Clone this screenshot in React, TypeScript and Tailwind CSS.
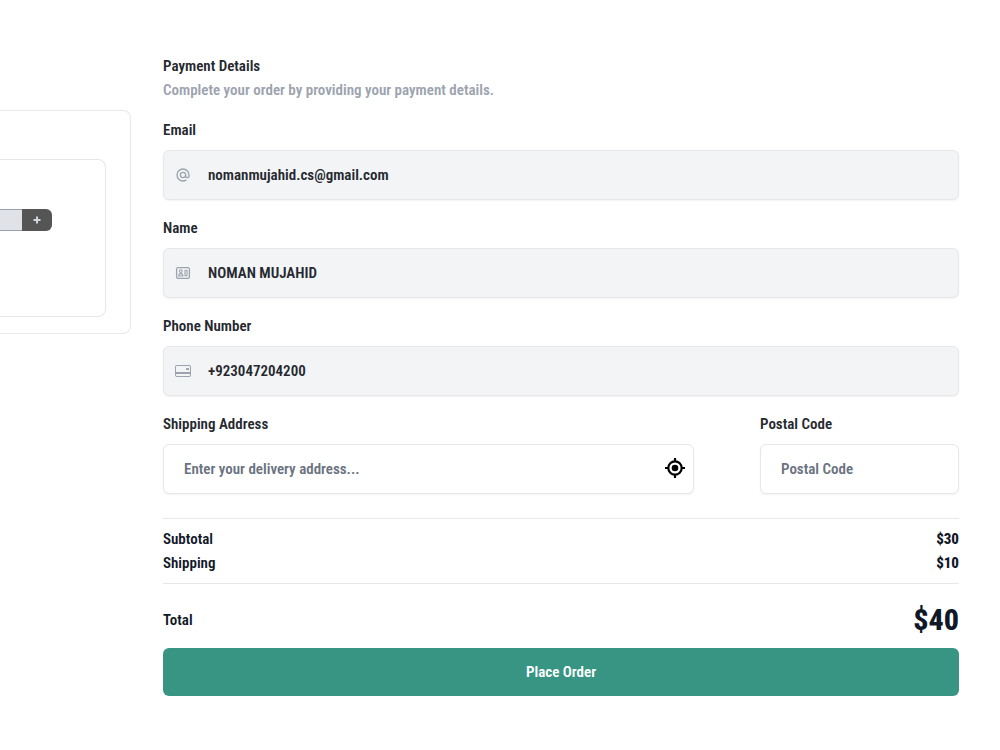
import React from "react";
import { BsCreditCard2Back } from "react-icons/bs";

function AtIcon() {
  return (
    <svg className="size-4" viewBox="0 0 24 24" fill="none" stroke="currentColor" strokeWidth="2" strokeLinecap="round" strokeLinejoin="round" aria-hidden="true">
      <path d="M16 12a4 4 0 10-8 0 4 4 0 008 0zm0 0v1.5a2.5 2.5 0 005 0V12a9 9 0 10-9 9m4.5-1.206a8.959 8.959 0 01-4.5 1.207" />
    </svg>
  );
}

function IdCardIcon() {
  return (
    <svg className="size-4" viewBox="0 0 16 16" fill="none" stroke="currentColor" aria-hidden="true">
      <rect x="1.6" y="2.6" width="12.8" height="10.8" rx="1.6" strokeWidth="1.3" />
      <circle cx="5.8" cy="6.1" r="1.4" strokeWidth="1.1" />
      <path d="M3.7 11c0-1.7.9-2.4 2.1-2.4s2.1.7 2.1 2.4z" strokeWidth="1.1" />
      <rect x="10" y="5.2" width="2" height="5.6" rx="0.4" strokeWidth="1.1" />
    </svg>
  );
}

function LocateIcon() {
  return (
    <svg className="size-5" viewBox="0 0 20 20" fill="none" stroke="currentColor" strokeWidth="2.2" aria-hidden="true">
      <circle cx="10" cy="10" r="6.7" />
      <circle cx="10" cy="10" r="3.3" fill="currentColor" stroke="none" />
      <path d="M10 0v3.6M10 16.4V20M0 10h3.6M16.4 10H20" />
    </svg>
  );
}

type FieldProps = {
  id: string;
  label: string;
  type: string;
  value: string;
  icon: React.ReactNode;
};

function Field({ id, label, type, value, icon }: FieldProps) {
  return (
    <div className="mt-4">
      <label htmlFor={id} className="mb-2 block">{label}</label>
      <div className="relative">
        <input
          id={id}
          type={type}
          defaultValue={value}
          readOnly
          className="block w-full rounded-md border border-gray-200 bg-gray-100 py-3 pr-3 pl-11 shadow-xs outline-none"
        />
        <span className="pointer-events-none absolute inset-y-0 left-0 flex items-center px-3 text-[#9ca3af]">{icon}</span>
      </div>
    </div>
  );
}

const inputClass =
  "block w-full rounded-md border border-gray-200 bg-white py-3 pl-5 shadow-xs outline-none placeholder:text-[#6b7280]";

export default function App() {
  return (
    <main className="flex min-h-screen items-start bg-white font-['Liberation_Sans_Narrow','Roboto_Condensed','Liberation_Sans',sans-serif] text-[15px] leading-6 font-semibold text-[#25282e]">
      <section aria-label="Cart" className="w-[131px] shrink-0 pt-[110px]">
        <div className="rounded-r-lg border border-l-0 border-gray-200 pt-12 pr-6 pb-4">
          <div className="rounded-r-lg border border-l-0 border-gray-200 pt-[49px] pb-[85px]">
            <div className="flex h-[22px]">
              <input
                type="text"
                aria-label="Quantity"
                className="w-[22px] border-y border-gray-400 bg-[#e1e2e7] outline-none"
              />
              <button type="button" aria-label="Increase quantity" className="flex w-[30px] items-center justify-center rounded-r-md bg-[#555555] text-gray-300">
                <svg className="size-2" viewBox="0 0 8 8" stroke="currentColor" strokeWidth="2" aria-hidden="true">
                  <path d="M4 0.5v7M0.5 4h7" />
                </svg>
              </button>
            </div>
          </div>
        </div>
      </section>

      <form className="min-w-0 flex-1 pt-[54px] pr-[41px] pb-8 pl-8" onSubmit={(e) => e.preventDefault()}>
        <h1>Payment Details</h1>
        <p className="text-[#9ca3af]">Complete your order by providing your payment details.</p>

        <Field id="email" label="Email" type="email" value="nomanmujahid.cs@gmail.com" icon={<AtIcon />} />
        <Field id="name" label="Name" type="text" value="NOMAN MUJAHID" icon={<IdCardIcon />} />
        <Field id="phone" label="Phone Number" type="tel" value="+923047204200" icon={<BsCreditCard2Back className="size-4" />} />

        <div className="mt-4 flex justify-between">
          <div className="w-2/3">
            <label htmlFor="address" className="mb-2 block">Shipping Address</label>
            <div className="relative">
              <input id="address" type="text" placeholder="Enter your delivery address..." className={`${inputClass} pr-11`} />
              <button type="button" aria-label="Use my location" className="absolute inset-y-0 right-[9px] flex items-center pb-0.5 text-black">
                <LocateIcon />
              </button>
            </div>
          </div>
          <div className="w-1/4">
            <label htmlFor="postal" className="mb-2 block">Postal Code</label>
            <input id="postal" type="text" placeholder="Postal Code" className={`${inputClass} pr-3`} />
          </div>
        </div>

        <dl className="mt-6 border-y border-gray-200 py-2 text-gray-900">
          <div className="flex justify-between">
            <dt>Subtotal</dt>
            <dd className="font-extrabold">$30</dd>
          </div>
          <div className="flex justify-between">
            <dt>Shipping</dt>
            <dd className="font-extrabold">$10</dd>
          </div>
        </dl>
        <div className="mt-6 flex items-center justify-between text-gray-900">
          <p>Total</p>
          <p className="text-[30px] leading-6 font-extrabold">$40</p>
        </div>
        <button type="submit" className="mt-4 w-full rounded-md bg-[#389583] py-3 text-white">Place Order</button>
      </form>
    </main>
  );
}
